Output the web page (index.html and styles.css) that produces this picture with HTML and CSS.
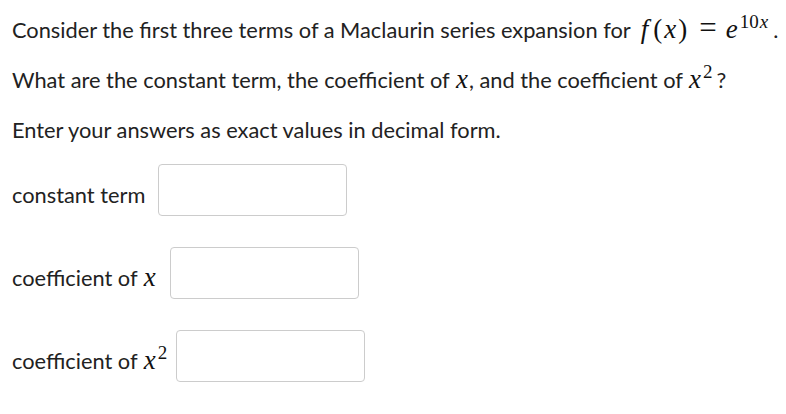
FILE: index.html
```html
<!DOCTYPE html>
<html>
<head>
<meta charset="utf-8">
<link rel="stylesheet" href="styles.css">
</head>
<body>
<div class="question">
  <p class="nowrap">Consider the first three terms of a Maclaurin series expansion for <span class="math math-end"><i class="fn">f</i><span class="paren">(</span><i>x</i><span class="paren">)</span><span class="rel">=</span><i>e</i><sup><span class="num">10</span><i>x</i></sup></span>.</p>
  <p>What are the constant term, the coefficient of <span class="math"><i>x</i></span>, and the coefficient of <span class="math math-end"><i>x</i><sup class="num">2</sup></span>?</p>
  <p>Enter your answers as exact values in decimal form.</p>
  <div class="answers">
    <div class="row">
      <label class="label">constant term</label>
      <input class="box" type="text">
    </div>
    <div class="row">
      <label class="label">coefficient of <span class="math"><i>x</i></span></label>
      <input class="box" type="text">
    </div>
    <div class="row">
      <label class="label label-tight">coefficient of <span class="math"><i>x</i><sup class="num">2</sup></span></label>
      <input class="box" type="text">
    </div>
  </div>
</div>
</body>
</html>
```

FILE: styles.css
```css
html, body {
  margin: 0;
  padding: 0;
  background: #ffffff;
}

.question {
  padding: 15px 0 0 12px;
  font-family: Lato, "Liberation Sans", sans-serif;
  font-size: 21.8px;
  color: #222222;
}

.question p {
  margin: 0 0 20px 0;
  line-height: 30px;
}

.question p.nowrap {
  white-space: nowrap;
}

.math {
  font-family: "Liberation Serif", "DejaVu Serif", serif;
  font-size: 27px;
  line-height: 0;
  color: #111111;
  white-space: nowrap;
}

.math-end {
  margin-right: 4px;
}

.math i {
  font-style: italic;
  margin: 0 1px;
}

.math i.fn {
  margin: 0 4px 0 5px;
}

.math .paren {
  font-style: normal;
  margin: 0 1px;
}

.math .num {
  font-style: normal;
}

.math .rel {
  font-style: normal;
  font-size: 31px;
  margin: 0 8px 0 11px;
}

.math sup {
  font-size: 19px;
  vertical-align: 10px;
  line-height: 0;
  margin-left: 1px;
}

.answers {
  display: flex;
  flex-direction: column;
  gap: 31px;
  margin-top: -1px;
}

.row {
  display: flex;
  align-items: center;
}

.label {
  padding-top: 10px;
  margin-right: 13px;
  line-height: 24px;
}

.label-tight {
  margin-right: 9px;
}

.box {
  box-sizing: border-box;
  width: 189px;
  height: 52px;
  border: 1px solid #cccccc;
  border-radius: 4px;
  background: #ffffff;
  margin: 0;
  padding: 6px 10px;
  font: inherit;
}
```
